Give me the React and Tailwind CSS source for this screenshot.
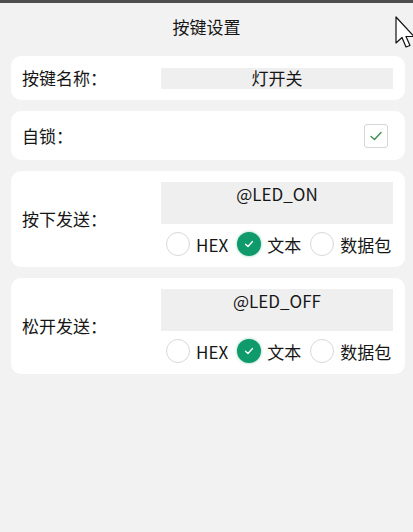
import React from "react";

const font = { fontFamily: '"Noto Sans CJK SC", "Noto Sans", sans-serif' };

function Radio({ checked, label }) {
  return (
    <div className="flex items-center">
      {checked ? (
        <div className="w-[24px] h-[24px] rounded-full bg-[#0e9a6a] flex items-center justify-center shadow-[0_0_3px_rgba(14,154,106,0.5)]">
          <svg width="12" height="12" viewBox="0 0 12 12" fill="none">
            <path d="M2.5 6.2 L5 8.5 L9.5 3.5" stroke="white" strokeWidth="1.3" strokeLinecap="round" strokeLinejoin="round" />
          </svg>
        </div>
      ) : (
        <div className="w-[24px] h-[24px] rounded-full border border-[#d8d8d8] bg-white" />
      )}
      <span className="ml-[6px] text-[17px] leading-none text-[#161616]">{label}</span>
    </div>
  );
}

function SendCard({ label, value }) {
  return (
    <div className="bg-white rounded-[10px] flex items-center pl-[11px] pr-[12px] pt-[11px] pb-[11px]">
      <div className="w-[139px] text-[17px] text-[#161616]">{label}</div>
      <div className="flex-1 flex flex-col">
        <div className="h-[42px] bg-[#efefef] text-center text-[17px] leading-none pt-[3px] text-[#161616]">{value}</div>
        <div className="flex items-center gap-[9px] mt-[8px] pl-[5px]">
          <Radio label="HEX" />
          <Radio checked label="文本" />
          <Radio label="数据包" />
        </div>
      </div>
    </div>
  );
}

export default function App() {
  return (
    <div className="relative w-[413px] h-[532px] bg-[#f2f2f2] overflow-hidden" style={font}>
      <div className="h-[3px] bg-[#4e4e4e]" />
      <div className="h-[53px] flex items-center justify-center text-[17px] text-[#161616] pb-[6px]">按键设置</div>
      <div className="flex flex-col gap-[11px] pl-[11px] pr-[8px]">
        <div className="bg-white rounded-[10px] h-[44px] flex items-center pl-[11px] pr-[12px]">
          <div className="w-[139px] text-[17px] text-[#161616]">按键名称：</div>
          <div className="flex-1 h-[21px] bg-[#efefef] flex items-center justify-center text-[17px] text-[#161616]">灯开关</div>
        </div>
        <div className="bg-white rounded-[10px] h-[49px] flex items-center justify-between pl-[11px] pr-[17px]">
          <div className="text-[17px] text-[#161616]">自锁：</div>
          <div className="w-[24px] h-[24px] rounded-[3px] border border-[#d6d6d6] flex items-center justify-center">
            <svg width="16" height="16" viewBox="0 0 16 16" fill="none">
              <path d="M3 8.5 L6.5 11.5 L13 4.5" stroke="#3c8f4f" strokeWidth="1.4" strokeLinecap="round" strokeLinejoin="round" />
            </svg>
          </div>
        </div>
        <SendCard label="按下发送：" value="@LED_ON" />
        <SendCard label="松开发送：" value="@LED_OFF" />
      </div>
      <svg className="absolute left-[395px] top-[16px]" width="22" height="34" viewBox="0 0 22 34">
        <path d="M1 1 L1 27 L7 21.5 L11 31 L15 29.5 L11 20.5 L19 20.5 Z" fill="white" stroke="#111" strokeWidth="1.2" strokeLinejoin="round" />
      </svg>
    </div>
  );
}
